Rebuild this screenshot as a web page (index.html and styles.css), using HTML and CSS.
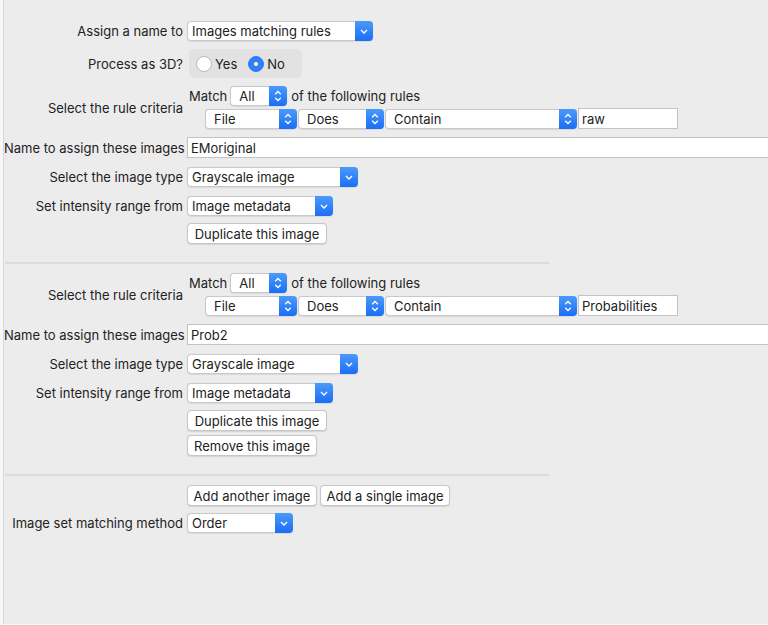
FILE: index.html
```html
<!DOCTYPE html>
<html>
<head>
<meta charset="utf-8">
<link rel="stylesheet" href="styles.css">
</head>
<body>
<div class="panel">
  <div class="row row-assign">
    <div class="label">Assign a name to</div>
    <div class="select w-assign"><span class="val">Images matching rules</span><span class="sbtn"><svg width="8" height="5" viewBox="0 0 8 5"><path d="M1 1 L4 4 L7 1" fill="none" stroke="#fff" stroke-width="1.4"/></svg></span></div>
  </div>
  <div class="row row-3d">
    <div class="label">Process as 3D?</div>
    <div class="radio-group">
      <span class="radio"></span><span class="rtext">Yes</span>
      <span class="radio on"></span><span class="rtext">No</span>
    </div>
  </div>

  <div class="row row-rules first">
    <div class="label">Select the rule criteria</div>
    <div class="rules">
      <div class="match-line">
        <span class="match-text">Match</span>
        <div class="select stepper w-all"><span class="val">All</span><span class="sbtn"><svg width="8" height="12" viewBox="0 0 8 12"><path d="M1.2 4.3 L4 1.5 L6.8 4.3 M1.2 7.7 L4 10.5 L6.8 7.7" fill="none" stroke="#fff" stroke-width="1.3"/></svg></span></div>
        <span class="match-tail">of the following rules</span>
      </div>
      <div class="rule-line">
        <div class="select stepper w-file"><span class="val">File</span><span class="sbtn"><svg width="8" height="12" viewBox="0 0 8 12"><path d="M1.2 4.3 L4 1.5 L6.8 4.3 M1.2 7.7 L4 10.5 L6.8 7.7" fill="none" stroke="#fff" stroke-width="1.3"/></svg></span></div>
        <div class="select stepper w-does"><span class="val">Does</span><span class="sbtn"><svg width="8" height="12" viewBox="0 0 8 12"><path d="M1.2 4.3 L4 1.5 L6.8 4.3 M1.2 7.7 L4 10.5 L6.8 7.7" fill="none" stroke="#fff" stroke-width="1.3"/></svg></span></div>
        <div class="select stepper w-contain"><span class="val">Contain</span><span class="sbtn"><svg width="8" height="12" viewBox="0 0 8 12"><path d="M1.2 4.3 L4 1.5 L6.8 4.3 M1.2 7.7 L4 10.5 L6.8 7.7" fill="none" stroke="#fff" stroke-width="1.3"/></svg></span></div>
        <div class="text-input w-rule">raw</div>
      </div>
    </div>
  </div>
  <div class="row row-name">
    <div class="label">Name to assign these images</div>
    <div class="text-input w-name">EMoriginal</div>
  </div>
  <div class="row row-type">
    <div class="label">Select the image type</div>
    <div class="select w-type"><span class="val">Grayscale image</span><span class="sbtn"><svg width="8" height="5" viewBox="0 0 8 5"><path d="M1 1 L4 4 L7 1" fill="none" stroke="#fff" stroke-width="1.4"/></svg></span></div>
  </div>
  <div class="row row-type">
    <div class="label">Set intensity range from</div>
    <div class="select w-range"><span class="val">Image metadata</span><span class="sbtn"><svg width="8" height="5" viewBox="0 0 8 5"><path d="M1 1 L4 4 L7 1" fill="none" stroke="#fff" stroke-width="1.4"/></svg></span></div>
  </div>
  <div class="row row-btn">
    <div class="label"></div>
    <button class="btn w-dup">Duplicate this image</button>
  </div>

  <div class="sep"></div>

  <div class="row row-rules second">
    <div class="label">Select the rule criteria</div>
    <div class="rules">
      <div class="match-line">
        <span class="match-text">Match</span>
        <div class="select stepper w-all"><span class="val">All</span><span class="sbtn"><svg width="8" height="12" viewBox="0 0 8 12"><path d="M1.2 4.3 L4 1.5 L6.8 4.3 M1.2 7.7 L4 10.5 L6.8 7.7" fill="none" stroke="#fff" stroke-width="1.3"/></svg></span></div>
        <span class="match-tail">of the following rules</span>
      </div>
      <div class="rule-line">
        <div class="select stepper w-file"><span class="val">File</span><span class="sbtn"><svg width="8" height="12" viewBox="0 0 8 12"><path d="M1.2 4.3 L4 1.5 L6.8 4.3 M1.2 7.7 L4 10.5 L6.8 7.7" fill="none" stroke="#fff" stroke-width="1.3"/></svg></span></div>
        <div class="select stepper w-does"><span class="val">Does</span><span class="sbtn"><svg width="8" height="12" viewBox="0 0 8 12"><path d="M1.2 4.3 L4 1.5 L6.8 4.3 M1.2 7.7 L4 10.5 L6.8 7.7" fill="none" stroke="#fff" stroke-width="1.3"/></svg></span></div>
        <div class="select stepper w-contain"><span class="val">Contain</span><span class="sbtn"><svg width="8" height="12" viewBox="0 0 8 12"><path d="M1.2 4.3 L4 1.5 L6.8 4.3 M1.2 7.7 L4 10.5 L6.8 7.7" fill="none" stroke="#fff" stroke-width="1.3"/></svg></span></div>
        <div class="text-input w-rule">Probabilities</div>
      </div>
    </div>
  </div>
  <div class="row row-name">
    <div class="label">Name to assign these images</div>
    <div class="text-input w-name">Prob2</div>
  </div>
  <div class="row row-type">
    <div class="label">Select the image type</div>
    <div class="select w-type"><span class="val">Grayscale image</span><span class="sbtn"><svg width="8" height="5" viewBox="0 0 8 5"><path d="M1 1 L4 4 L7 1" fill="none" stroke="#fff" stroke-width="1.4"/></svg></span></div>
  </div>
  <div class="row row-type">
    <div class="label">Set intensity range from</div>
    <div class="select w-range"><span class="val">Image metadata</span><span class="sbtn"><svg width="8" height="5" viewBox="0 0 8 5"><path d="M1 1 L4 4 L7 1" fill="none" stroke="#fff" stroke-width="1.4"/></svg></span></div>
  </div>
  <div class="row row-btn">
    <div class="label"></div>
    <button class="btn w-dup">Duplicate this image</button>
  </div>
  <div class="row row-btn2">
    <div class="label"></div>
    <button class="btn w-130">Remove this image</button>
  </div>

  <div class="sep"></div>

  <div class="row row-add">
    <div class="label"></div>
    <div class="btn-pair">
      <button class="btn w-130">Add another image</button>
      <button class="btn w-130">Add a single image</button>
    </div>
  </div>
  <div class="row row-order">
    <div class="label">Image set matching method</div>
    <div class="select w-order"><span class="val">Order</span><span class="sbtn"><svg width="8" height="5" viewBox="0 0 8 5"><path d="M1 1 L4 4 L7 1" fill="none" stroke="#fff" stroke-width="1.4"/></svg></span></div>
  </div>
</div>
</body>
</html>
```

FILE: styles.css
```css
html, body {
  margin: 0;
  padding: 0;
  background: #f7f7f7;
}
body {
  font-family: "Inter", "Liberation Sans", sans-serif;
  font-size: 13px;
  color: #222222;
}
.panel {
  margin-left: 3px;
  width: 765px;
  height: 624px;
  box-sizing: border-box;
  background: #ececec;
  border-left: 1px solid #d9d9d9;
  padding-top: 21px;
  overflow: hidden;
  display: flex;
  flex-direction: column;
}
.row {
  display: flex;
  align-items: center;
  flex-shrink: 0;
}
.label {
  width: 179px;
  flex-shrink: 0;
  text-align: right;
  margin-right: 4px;
  white-space: nowrap;
}
.row-assign { height: 20px; }
.row-3d { margin-top: 8px; height: 29px; }
.row-rules.first { margin-top: 8px; }
.row-rules.second { margin-top: 9px; }
.row-name { margin-top: 8px; height: 21px; }
.row-type { margin-top: 9px; height: 20px; }
.row-btn { margin-top: 7px; height: 21px; }
.row-btn2 { margin-top: 4px; height: 21px; }
.row-add { margin-top: 9px; height: 21px; }
.row-order { margin-top: 7px; height: 20px; }

.select {
  display: flex;
  height: 20px;
  box-sizing: border-box;
  background: #fff;
  border: 1px solid #c9c9c9;
  border-right: none;
  border-radius: 4px;
  box-shadow: 0 0.5px 1px rgba(0,0,0,0.08);
  flex-shrink: 0;
}
.select .val {
  flex: 1;
  padding-left: 4px;
  line-height: 19px;
  white-space: nowrap;
  overflow: hidden;
}
.select.stepper .val { padding-left: 8px; }
.sbtn {
  width: 18px;
  margin: -1px 0 -1px 0;
  border-radius: 0 4px 4px 0;
  background: linear-gradient(#4b9afa, #1b6ef5);
  display: flex;
  align-items: center;
  justify-content: center;
}
.w-assign { width: 186px; }
.w-all { width: 57px; }
.w-file { width: 92px; }
.w-does { width: 86px; }
.w-contain { width: 192px; }
.w-type { width: 171px; }
.w-range { width: 146px; }
.w-order { width: 106px; }

.text-input {
  height: 21px;
  box-sizing: border-box;
  background: #fff;
  border: 1px solid #c3c3c3;
  padding-left: 3px;
  line-height: 20px;
  white-space: nowrap;
  flex-shrink: 0;
}
.w-rule { width: 100px; }
.w-name { width: 600px; }

.radio-group {
  margin-left: 2px;
  width: 113px;
  height: 29px;
  box-sizing: border-box;
  background: #e2e2e2;
  border-radius: 5px;
  display: flex;
  align-items: center;
  padding-left: 7px;
}
.radio {
  width: 16px;
  height: 16px;
  box-sizing: border-box;
  border-radius: 50%;
  background: #fff;
  border: 1px solid #b9b9b9;
  flex-shrink: 0;
  position: relative;
}
.radio.on {
  background: #2f7ff7;
  border-color: #2a79f2;
  margin-left: 11px;
}
.radio.on::after {
  content: "";
  position: absolute;
  left: 5px;
  top: 5px;
  width: 4px;
  height: 4px;
  border-radius: 50%;
  background: #fff;
}
.rtext { margin-left: 3px; }

.rules {
  display: flex;
  flex-direction: column;
}
.match-line {
  display: flex;
  align-items: center;
  height: 20px;
}
.match-text { margin-left: 2px; margin-right: 3px; }
.match-tail { margin-left: 4px; }
.rule-line {
  display: flex;
  align-items: center;
  margin-top: 2px;
  margin-left: 18px;
  height: 21px;
  gap: 1px;
}

.btn {
  font-family: inherit;
  font-size: 13px;
  color: #222222;
  height: 21px;
  box-sizing: border-box;
  background: #fff;
  border: 1px solid #c6c6c6;
  border-radius: 4px;
  box-shadow: 0 0.5px 1px rgba(0,0,0,0.1);
  padding: 0;
  margin: 0;
  text-align: center;
  white-space: nowrap;
}
.w-dup { width: 140px; }
.w-130 { width: 130px; }
.btn-pair { display: flex; gap: 3px; }

.sep {
  margin-top: 18px;
  margin-left: 1px;
  width: 544px;
  height: 2px;
  background: #dddddd;
  flex-shrink: 0;
}
```
